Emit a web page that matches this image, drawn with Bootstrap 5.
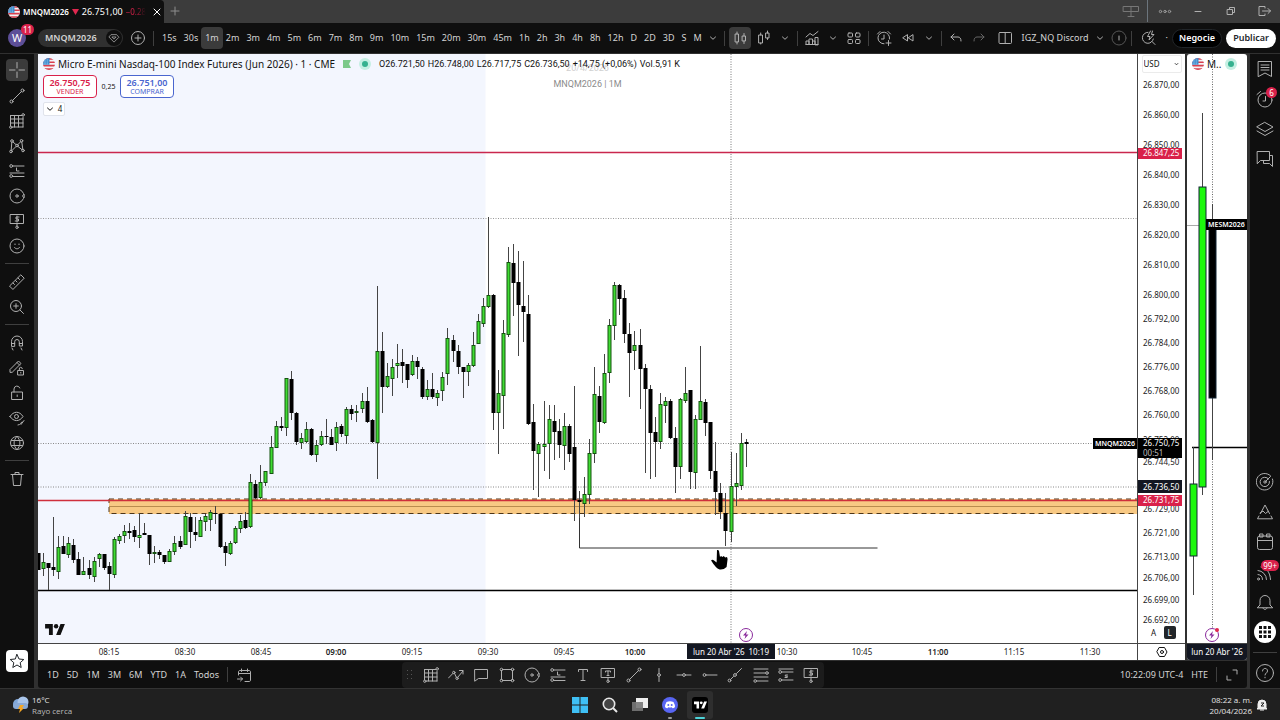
<!DOCTYPE html>
<html lang="es">
<head>
<meta charset="utf-8">
<meta name="viewport" content="width=device-width, initial-scale=1">
<title>MNQM2026 26.751,00</title>
<link href="https://cdn.jsdelivr.net/npm/bootstrap@5.3.0/dist/css/bootstrap.min.css" rel="stylesheet">
<style>
  :root { --ink:#0f0f0f; --frame:#3c3c3c; --soft:#d4d4d4; --red:#d9214a; --blue:#4a66cf; }
  body { font-family:"Noto Sans","Open Sans",sans-serif; font-size:9px; line-height:12px; background:#303030; color:var(--soft); min-height:100vh; overflow-x:hidden; }
  button { font:inherit; color:inherit; background:none; border:0; padding:0; flex:none; }
  svg { display:block; flex:none; overflow:visible; }
  .ic { fill:none; stroke:currentColor; stroke-width:1; stroke-linecap:round; stroke-linejoin:round; width:16px; height:16px; }
  .slot { color:#b0b0b0; }
  .ic-s { width:8px; height:8px; }
  .slot { display:flex; align-items:center; justify-content:center; height:22px; }
  .s16 { width:16px; } .s20 { width:20px; } .s22 { width:22px; } .s26 { width:26px; } .s30 { width:30px; } .s33 { width:33px; }
  .on { background:#3b3b3b; border-radius:4px; }
  .vsep { width:1px; height:15px; background:#3f3f3f; margin:0 4px; flex:none; }
  .tabs { height:23px; background:var(--frame); }
  .tab-on { width:164px; background:var(--ink); padding:0 2px 0 8px; border-radius:0 4px 0 0; gap:3px; }
  .tab-name { font-size:8px; }
  .fade-end { flex:none; font-size:8px; white-space:nowrap; color:var(--red); -webkit-mask-image:linear-gradient(90deg,#000 40%,transparent); mask-image:linear-gradient(90deg,#000 40%,transparent); }
  .tools { height:30px; background:var(--ink); }
  .avatar { width:18px; height:18px; border-radius:50%; background:#5d4f98; color:#fff; font-size:11px; margin-left:8px; flex:none; }
  .pip { position:absolute; background:var(--red); color:#fff; border-radius:6px; font-size:8px; line-height:11px; height:11px; min-width:11px; text-align:center; padding:0 2px; }
  .symbox { width:85px; height:18px; border-radius:9px; background:#303030; margin-left:12px; padding:0 1px 0 7px; }
  .symbox .slot { width:16px; height:16px; border-radius:50%; background:var(--ink); }
  .frames { gap:7px; }
  .frames button { position:relative; }
  .frames .on { margin:0 -4px; padding:5px 4px; }
  .pill { width:50px; height:19px; border-radius:10px; font-weight:600; }
  .work { padding-top:1px; }
  .rail { background:var(--ink); flex:none; padding-top:5px; }
  .rail-l { width:34px; }
  .rail-r { width:30px; padding-top:0; }
  .rail-l .tool { height:25px; width:22px; }
  .rail-l .tool.on { height:22px; margin:0 0 2px; }
  .rail-r .tool { height:30px; width:30px; position:relative; }
  .rail-r .ic { width:18px; height:18px; }
  .hsep { width:24px; height:1px; background:#3f3f3f; margin:5px 0; flex:none; }
  .desk { min-width:0; padding:0 3px 0 4px; }
  .pane { background:#fff; color:#131313; position:relative; min-width:0; }
  .stage { flex:1 1 0; min-height:0; position:relative; overflow:hidden; }
  .stage > svg, .axis > svg { position:absolute; inset:0; width:100%; height:100%; }
  .timeline { height:17px; border-top:1px solid #444; position:relative; overflow:hidden; flex:none; }
  .timeline > svg { width:100%; height:16px; }
  .axis { width:48px; border-left:1px solid #444; flex:none; position:relative; }
  .mini { width:60px; flex:none; border-radius:3px; overflow:hidden; margin-left:2px; }
  .legend { position:absolute; left:5px; top:3px; white-space:nowrap; }
  .flag-gap { margin-right:3px; }
  .inst { font-size:10px; line-height:14px; }
  .ohlc { font-family:Roboto,"Noto Sans",sans-serif; gap:3px; padding-left:4px; }
  .trade { width:54px; height:23px; border:1px solid; border-radius:4px; background:#fff; font-size:7px; line-height:9px; }
  .trade b { font-size:9px; line-height:9px; display:block; font-weight:600; }
  .spread { width:23px; font-size:7px; text-align:center; }
  .count { width:22px; height:14px; background:#fff; border:1px solid #e0e3eb; border-radius:2px; font-size:8px; line-height:10px; }
  .wm { position:absolute; left:0; right:0; top:6px; text-align:center; color:#8b8b8b; font-family:Roboto,"Noto Sans",sans-serif; line-height:16px; }
  .wm-date { color:#cfcfcf; }
  .t8 { font-size:8px; }
  .scale-b { width:12px; height:13px; border-radius:2px; font-size:8px; line-height:12px; }
  .cur { width:40px; height:18px; font-size:8px; line-height:16px; border:1px solid #ebebeb; border-radius:2px; background:#fff url("data:image/svg+xml,%3Csvg xmlns='http://www.w3.org/2000/svg' viewBox='0 0 6 4'%3E%3Cpath d='M1 1l2 2 2-2' fill='none' stroke='%23222'/%3E%3C/svg%3E") no-repeat right 2px center/5px 4px; appearance:none; padding:0 1px; color:#131313; margin:1px auto 0; }
  .ranges { height:27px; background:var(--ink); margin-top:1px; border-radius:0 0 3px 3px; }
  .ranges-l { flex:0 0 364px; padding-left:9px; gap:8px; }
  .dock { flex:0 0 422px; background:#1c1c1c; border-radius:4px; height:26px; }
  .dock button { flex:1 1 0; }
  .taskbar { min-height:32px; background:#202020; border-top:1px solid #333; display:grid; grid-template-columns:1fr auto 1fr; font-size:8px; line-height:11px; color:#e6e6e6; font-family:"Open Sans",sans-serif; }
  .taskbar button { width:30px; height:28px; position:relative; }
  .taskbar button.open { width:26px; background:#2e2e2e; border-radius:3px; margin:0 2px; }
  .tray { padding-right:13px; gap:5px; }
  .run { position:absolute; bottom:0; left:50%; width:4px; margin-left:-2px; height:2px; border-radius:1px; background:#9a9a9a; }
  .open .run { width:10px; margin-left:-5px; background:#4cd3d8; }
</style>
</head>
<body class="d-flex flex-column">

<svg width="0" height="0" class="position-absolute" aria-hidden="true">
  <defs>
    <symbol id="flag" viewBox="0 0 12 12"><clipPath id="fc"><circle cx="6" cy="6" r="6"/></clipPath><g clip-path="url(#fc)" stroke="none"><path fill="#f4f4f6" d="M0 0h12v12H0z"/><path fill="#d8404f" d="M0 0h12v1.7H0zM0 3.4h12v1.7H0zM0 6.8h12v1.7H0zM0 10.2h12v1.8H0z"/><path fill="#3f8fd0" d="M0 0h6.5v6.8H0z"/><path stroke="#d5e8f7" stroke-width=".7" stroke-dasharray=".7 1" d="M.8 2h5M.8 4h5M.8 5.8h5"/></g></symbol>
    <symbol id="chev" viewBox="0 0 8 8"><path d="M1.500 3L4 5.300 6.500 3"/></symbol>
    <symbol id="cross" viewBox="0 0 16 16"><path d="M8 .5V6M8 10v5.500M.5 8H6M10 8h5.500"/></symbol>
    <symbol id="trend" viewBox="0 0 16 16"><circle cx="2.500" cy="13.500" r="1.500"/><circle cx="13.500" cy="2.500" r="1.500"/><path d="M3.600 12.400l8.800-8.800"/></symbol>
    <symbol id="gridbox" viewBox="0 0 16 16"><path d="M1.500 2.500H13M1.500 6H14M1.500 10H14M3.500 14H14M1.500 2.500V13M5.500 2.500V14M9.500 2.500V14M14 4v10"/><circle cx="14.200" cy="1.800" r="1.200"/><circle cx="1.800" cy="14.200" r="1.200"/></symbol>
    <symbol id="xabcd" viewBox="0 0 16 16"><circle cx="3" cy="3" r="1.300"/><circle cx="12.500" cy="2.800" r="1.300"/><circle cx="8" cy="7.500" r="1.300"/><circle cx="2" cy="13.500" r="1.300"/><circle cx="14" cy="12.500" r="1.300"/><path d="M2.800 4.300L2.200 12M12.800 4l1 7.200M4 4l3 2.600M11.600 3.800L9 6.500M3 12.500l4-4M9 8.500l4 3.200"/></symbol>
    <symbol id="pos" viewBox="0 0 16 16"><circle cx="2.200" cy="3" r="1.400"/><circle cx="2.200" cy="13" r="1.400"/><path d="M4 3h11M1 10h14M4 13.500h11M7.500 5v3h2.500"/></symbol>
    <symbol id="short" viewBox="0 0 16 16"><circle cx="2.200" cy="5" r="1.400"/><circle cx="2.200" cy="13" r="1.400"/><path d="M1 2h14M4 5h11M4 13h11M9.500 8H7.300v1.200h2v1.300H7"/></symbol>
    <symbol id="circ" viewBox="0 0 16 16"><circle cx="8" cy="8" r="7"/><circle cx="8" cy="8" r="1.200"/><circle cx="15" cy="8" r="1.300" fill="#0f0f0f"/></symbol>
    <symbol id="pnote" viewBox="0 0 16 16"><path d="M1.500 1.500h13v9h-13zM8 10.500V13M10 4H7v2h2.500v2H6.200M8 3v6.200"/><circle cx="8" cy="14.300" r="1.200"/></symbol>
    <symbol id="tnote" viewBox="0 0 16 16"><path d="M1.500 1.500h13v9h-13zM8 10.500V13M5.500 5V4h5v1M8 4v4.500M7 8.500h2"/><circle cx="8" cy="14.300" r="1.200"/></symbol>
    <symbol id="smile" viewBox="0 0 16 16"><circle cx="8" cy="8" r="7"/><path d="M6 6v.6M10 6v.6M5.500 9.500c1.200 1.800 3.800 1.800 5 0"/></symbol>
    <symbol id="ruler" viewBox="0 0 16 16"><path d="M.8 11.800L11.800.8l3.400 3.400L4.200 15.200zM4 9l1.500 1.500M6.500 6.500L8 8M9 4l1.500 1.500"/></symbol>
    <symbol id="zoomin" viewBox="0 0 16 16"><circle cx="7" cy="7" r="5.500"/><path d="M11 11l3.500 3.500M4.700 7h4.600M7 4.700v4.600"/></symbol>
    <symbol id="magnet" viewBox="0 0 16 16"><path d="M2.500 11V6.500a5.500 5.500 0 0 1 11 0V11h-3.200V6.800a2.300 2.300 0 0 0-4.600 0V11zM2.500 8.500h3.200M10.300 8.500h3.200M3 13l1 2M12 13l1 2"/></symbol>
    <symbol id="penlock" viewBox="0 0 16 16"><path d="M1 12V9.500L9.500 1 12 3.500 3.500 12zM8 2.500L10.500 5M9 10.500h5.500V15H9zM10.300 10.500V9a1.500 1.500 0 0 1 3-.3M11.800 12.300v.8"/></symbol>
    <symbol id="unlock" viewBox="0 0 16 16"><path d="M3 7h10.500v7.500H3zM5 7V4a3 3 0 0 1 5.800-1M8.200 10v1.500"/></symbol>
    <symbol id="eye" viewBox="0 0 16 16"><path d="M1 6.500C4.500.8 10.500.8 14 6.500 10.500 12 4.500 12 1 6.500z"/><circle cx="7.500" cy="6.500" r="2"/><path d="M9 15c3 0 2-2.500 4-3M12 14.500l3-4"/></symbol>
    <symbol id="globe" viewBox="0 0 16 16"><circle cx="8" cy="8" r="6.500"/><path d="M2.500 5.500h11M2.500 10.500h11M8 1.500c-4 3.500-4 9.500 0 13M8 1.500c4 3.500 4 9.500 0 13"/></symbol>
    <symbol id="trash" viewBox="0 0 16 16"><path d="M2 3.500h12M6 3.500v-2h4v2M3.500 3.500L4.500 14.500h7l1-11"/></symbol>
    <symbol id="star" viewBox="0 0 16 16"><path d="M8 1.500l2 4.500 4.800.5-3.600 3.200 1 4.800L8 12l-4.200 2.500 1-4.800L1.200 6.500 6 6z"/></symbol>
    <symbol id="candles" viewBox="0 0 16 16"><path d="M3.500 4h3v8h-3zM5 2v2M5 12v2M10.500 6h3v5h-3zM12 3.500V6M12 11v2.500"/></symbol>
    <symbol id="hollow" viewBox="0 0 16 16"><path d="M3 5h3.500v8H3zM4.700 3v2M4.700 13v1M10 3h3v5h-3zM11.500 1v2M11.500 8v1.500"/></symbol>
    <symbol id="indic" viewBox="0 0 16 16"><path d="M2 14.500V11h3v3.500M5 14.500V9h3.500v5.500M8.500 11h2.500v3.500M11 14.500V7.500h3v7zM2 14.500h12M2 7l4-3.500 3 2L14 1.500"/></symbol>
    <symbol id="four" viewBox="0 0 16 16"><rect x="2" y="3" width="4.500" height="4" rx="1"/><rect x="9.500" y="3" width="4.500" height="4" rx="1"/><rect x="2" y="9.500" width="4.500" height="4" rx="1"/><rect x="9.500" y="9.500" width="4.500" height="4" rx="1"/></symbol>
    <symbol id="alarm" viewBox="0 0 16 16"><path d="M13.500 9A5.800 5.800 0 1 0 8 13.800M8 5v4H5.500M1.500 4l2.500-2.500M12 1.500L14.500 4M12.500 10.500v5M10 13h5"/></symbol>
    <symbol id="rew" viewBox="0 0 16 16"><path d="M7.500 5v6L3 8zM13 5v6L8.500 8z"/></symbol>
    <symbol id="undo" viewBox="0 0 16 16"><path d="M6 4L3 7l3 3M3 7h7c2 0 3 1.500 3 4"/></symbol>
    <symbol id="redo" viewBox="0 0 16 16"><path d="M10 4l3 3-3 3M13 7H6c-2 0-3 1.500-3 4"/></symbol>
    <symbol id="split" viewBox="0 0 16 16"><rect x="2" y="2.500" width="12.500" height="11" rx="1"/><path d="M8.200 2.500v11"/></symbol>
    <symbol id="boltfind" viewBox="0 0 16 16"><path d="M7 2.300A5.500 5.500 0 1 0 12.300 9M11 11.500l3 3M9.500 1L6.500 6.500h2.500L8 10l5-5.500h-2.500L11.500 1"/></symbol>
    <symbol id="heart" viewBox="0 0 16 16"><path d="M4.500 3.500h7L14.500 7 8 13.500 1.500 7zM5.500 7L8 9.500 10.500 7z"/></symbol>
    <symbol id="plus" viewBox="0 0 16 16"><circle cx="8" cy="8" r="6.500"/><path d="M8 5v6M5 8h6"/></symbol>
    <symbol id="list" viewBox="0 0 18 18"><path d="M2.500 1.500h13v15L9 13l-6.500 3.500zM5 5h8M5 7.500h8M5 10h8"/></symbol>
    <symbol id="clock" viewBox="0 0 18 18"><circle cx="9" cy="10" r="7"/><path d="M9.500 6.500V11H7M1 4.500L4.500 1.500"/></symbol>
    <symbol id="layers" viewBox="0 0 18 18"><path d="M9 2.500l8 4.500-8 4.500L1 7zM1 11l8 4.500 8-4.500"/></symbol>
    <symbol id="chat" viewBox="0 0 18 18"><path d="M1.500 1.500h12v9h-9l-3 3zM13.500 5.500h3v11l-3-3h-6v-3"/></symbol>
    <symbol id="radar" viewBox="0 0 18 18"><path d="M14.500 2.800A8.300 8.300 0 1 0 16.500 6M12.500 6A4.700 4.700 0 1 0 13.500 8.500M9.500 8.500L14.500 3.500"/><circle cx="9" cy="9" r="1.200"/></symbol>
    <symbol id="peak" viewBox="0 0 18 18"><path d="M4.500 10.500L9 2l4.500 8.500M4 10l3-2 2.500 2.500L12 8.500M3 13l-1.500 2.800h15L15 13"/></symbol>
    <symbol id="cal" viewBox="0 0 18 18"><rect x="1.500" y="3" width="15" height="13.500" rx="2"/><path d="M1.500 7.500h15M4 1h3v3H4zM11 1h3v3h-3z"/></symbol>
    <symbol id="feed" viewBox="0 0 18 18"><path d="M2 11.500a5 5 0 0 1 4.500 5M2 7.500a9 9 0 0 1 8.500 9M5 4c6 1 9 5.500 9.500 12.500"/><circle cx="2.500" cy="16" r="1"/></symbol>
    <symbol id="bell" viewBox="0 0 18 18"><path d="M1.500 14.500L4 12V7.500a5 5 0 0 1 10 0V12l2.500 2.500zM7 15c.5 2 3.500 2 4 0"/></symbol>
    <symbol id="help" viewBox="0 0 18 18"><circle cx="9" cy="9" r="8.500"/><path d="M6.500 7c0-3.500 5-3.500 5 0 0 2-2.500 2-2.500 4M9 13.200v.6"/></symbol>
    <symbol id="zig" viewBox="0 0 16 16"><path d="M.5 11L4.800 6.500M6.600 6.500l1.700 3.600M9.800 10.200L15 4M11.500 3.500H15V7"/><circle cx="5.800" cy="5.500" r="1.200"/><circle cx="9" cy="11.300" r="1.200"/></symbol>
    <symbol id="bubble" viewBox="0 0 16 16"><path d="M2 2.500h12.500v9H5.500l-3.500 2.500z"/></symbol>
    <symbol id="rect" viewBox="0 0 16 16"><path d="M3.500 2.500h9M3.500 13.500h9M2.500 3.500v9M13.500 3.500v9"/><circle cx="2.500" cy="2.500" r="1.300"/><circle cx="13.500" cy="2.500" r="1.300"/><circle cx="2.500" cy="13.500" r="1.300"/><circle cx="13.500" cy="13.500" r="1.300"/></symbol>
    <symbol id="tee" viewBox="0 0 16 16"><path d="M3.500 4.500v-2h9v2M8 2.500v11M6 13.500h4"/></symbol>
    <symbol id="vline" viewBox="0 0 16 16"><path d="M8 1.500v5M8 9.500v5"/><circle cx="8" cy="8" r="1.400"/></symbol>
    <symbol id="hline" viewBox="0 0 16 16"><path d="M1 8h5.500M9.500 8H15"/><circle cx="8" cy="8" r="1.400"/></symbol>
    <symbol id="ray" viewBox="0 0 16 16"><path d="M4 8h11"/><circle cx="2.500" cy="8" r="1.400"/></symbol>
    <symbol id="tray" viewBox="0 0 16 16"><path d="M3.500 12.500l3-3M9.500 6.500L14.500 1.500"/><circle cx="2.500" cy="13.500" r="1.400"/><circle cx="8" cy="8" r="1.400"/></symbol>
    <symbol id="fib" viewBox="0 0 16 16"><path d="M1 2h14M1 6h11.500M1 10h14M4 14h11"/><circle cx="14" cy="6" r="1.300"/><circle cx="2.200" cy="14" r="1.300"/></symbol>
    <symbol id="goto" viewBox="0 0 16 16"><path d="M2.500 8V5c0-1 .5-1.500 1.500-1.500h9c1 0 1.500.5 1.500 1.500v8c0 1-.5 1.500-1.500 1.500H9M5.500 2v2.500M11.500 2v2.500M2.500 6.500h12M1.500 12h5M4.500 10l2 2-2 2"/></symbol>
    <symbol id="tv" viewBox="0 0 36 20"><path stroke="none" fill="currentColor" d="M14 20H7V8H0V0h14zM28 20h-8L28 0h8z"/><circle cx="20" cy="4" r="4" stroke="none" fill="currentColor"/></symbol>
  </defs>
</svg>

<!-- window tabs -->
<header class="tabs d-flex align-items-stretch">
  <div class="tab-on d-flex align-items-center text-white">
    <svg width="12" height="12"><use href="#flag"/></svg>
    <b class="fw-semibold tab-name">MNQM2026</b>
    <svg width="7" height="6"><path d="M0 0h7L3.500 6z" fill="#e0284f"/></svg>
    <span>26.751,00</span><span class="fade-end">−0.28</span>
    <button class="slot s16 ms-auto text-white" aria-label="Cerrar"><svg class="ic ic-s"><path d="M1 1l6 6M7 1L1 7"/></svg></button>
  </div>
  <button class="slot s22" aria-label="Nueva pestaña"><svg class="ic ic-s" style="color:#8d8d8d"><path d="M4 0v8M0 4h8"/></svg></button>
  <div class="ms-auto d-flex">
    <button class="slot s33 border-end border-secondary" aria-label="Pantalla"><svg class="ic" style="color:#777"><path d="M.5 3.500h15v5H.5zM8 3.500v10M5 13.500h6"/></svg></button>
    <button class="slot s33" aria-label="Menú"><svg class="ic" style="color:#999"><circle cx="3.500" cy="8.500" r="1.200"/><circle cx="8" cy="8.500" r="1.200"/><circle cx="12.500" cy="8.500" r="1.200"/></svg></button>
    <button class="slot s33" aria-label="Minimizar"><svg class="ic"><path d="M5 8.500h6"/></svg></button>
    <button class="slot s33" aria-label="Restaurar"><svg class="ic"><path d="M4.500 6.500h5v5h-5zM6.500 6.500v-2h5v5h-2"/></svg></button>
    <button class="slot s33" aria-label="Salir"><svg class="ic"><path d="M9 5V3.500H3v9h6V11M6.500 8h8M12 5.500L14.500 8 12 10.500"/></svg></button>
  </div>
</header>

<!-- chart toolbar -->
<nav class="tools d-flex align-items-center" aria-label="Herramientas del gráfico">
  <button class="avatar slot position-relative text-white" aria-label="Cuenta">W<span class="pip" style="left:13px;top:-5px">11</span></button>
  <div class="symbox d-flex align-items-center justify-content-between flex-shrink-0"><b class="fw-semibold">MNQM2026</b><button class="slot" aria-label="Favorito"><svg class="ic" viewBox="0 0 16 16" style="width:12px;height:12px"><use href="#heart"/></svg></button></div>
  <button class="slot s30" aria-label="Comparar"><svg class="ic"><use href="#plus"/></svg></button>
  <div class="vsep ms-0"></div>
  <div class="frames d-flex align-items-center ps-1" id="frames"></div>
  <button class="slot s22" aria-label="Más intervalos"><svg class="ic ic-s"><use href="#chev"/></svg></button>
  <div class="vsep ms-0"></div>
  <button class="slot s22 on" aria-label="Velas"><svg class="ic"><use href="#candles"/></svg></button>
  <button class="slot s26" aria-label="Velas huecas"><svg class="ic"><use href="#hollow"/></svg></button>
  <button class="slot s16" aria-label="Tipos"><svg class="ic ic-s"><use href="#chev"/></svg></button>
  <div class="vsep"></div>
  <button class="slot s20" aria-label="Indicadores"><svg class="ic"><use href="#indic"/></svg></button>
  <button class="slot s22" aria-label="Plantillas"><svg class="ic ic-s"><use href="#chev"/></svg></button>
  <button class="slot s20" aria-label="Diseño"><svg class="ic"><use href="#four"/></svg></button>
  <div class="vsep"></div>
  <button class="slot s22" aria-label="Alerta"><svg class="ic"><use href="#alarm"/></svg></button>
  <button class="slot s26" aria-label="Reproducción"><svg class="ic"><use href="#rew"/></svg></button>
  <button class="slot s16" aria-label="Opciones"><svg class="ic ic-s"><use href="#chev"/></svg></button>
  <div class="vsep"></div>
  <button class="slot s20" aria-label="Deshacer"><svg class="ic"><use href="#undo"/></svg></button>
  <button class="slot s26" aria-label="Rehacer"><svg class="ic" style="color:#666"><use href="#redo"/></svg></button>
  <button class="slot s26" aria-label="Distribución"><svg class="ic"><use href="#split"/></svg></button>
  <button class="ms-1">IGZ_NQ Discord</button>
  <button class="slot s22" aria-label="Diseños guardados"><svg class="ic ic-s"><use href="#chev"/></svg></button>
  <button class="slot s16" aria-label="Información"><svg class="ic"><circle cx="8" cy="8" r="7" stroke="#555"/><path d="M8 6v4"/></svg></button>
  <div class="ms-auto d-flex align-items-center pe-1">
    <div class="vsep"></div>
    <button class="slot s26" aria-label="Buscar"><svg class="ic"><use href="#boltfind"/></svg></button>
    <span class="me-1 ms-1">·</span>
    <button class="pill border border-dark text-white" style="background:#000">Negocie</button>
    <button class="pill ms-1 bg-white text-dark">Publicar</button>
  </div>
</nav>

<main class="work d-flex flex-fill">
  <nav class="rail rail-l d-flex flex-column align-items-center" id="railL" aria-label="Dibujo"></nav>

  <div class="desk d-flex flex-column flex-fill">
    <div class="d-flex flex-fill">
      <section class="pane d-flex flex-fill flex-column">
        <div class="stage">
          <svg id="chart"></svg>
          <div class="wm"><div class="wm-date">20/4/2026</div>MNQM2026 | 1M</div>
          <div class="legend">
            <div class="d-flex align-items-center">
              <svg width="12" height="12" class="flag-gap"><use href="#flag"/></svg>
              <span class="inst">Micro E-mini Nasdaq-100 Index Futures (Jun 2026) · 1 · CME</span>
              <svg width="8" height="8" class="ms-2"><path d="M0 0h8L6 4l2 4H0z" fill="#7cc98a"/></svg>
              <svg width="12" height="12" class="ms-2 me-1"><circle cx="6" cy="6" r="6" fill="#c5efe3"/><circle cx="6" cy="6" r="3" fill="#35b18f"/></svg>
              <span class="ohlc d-flex"><span>O26.721,50</span><span>H26.748,00</span><span>L26.717,75</span><span>C26.736,50</span><span>+14,75 (+0,06%)</span><span>Vol.5,91 K</span></span>
            </div>
            <div class="d-flex align-items-center mt-1">
              <button class="trade" style="color:var(--red)"><b>26.750,75</b>VENDER</button>
              <span class="spread">0,25</span>
              <button class="trade" style="color:var(--blue)"><b>26.751,00</b>COMPRAR</button>
            </div>
            <button class="count d-flex align-items-center justify-content-center mt-1"><svg class="ic ic-s me-1"><use href="#chev"/></svg>4</button>
          </div>
        </div>
        <div class="timeline"><svg id="times"></svg></div>
      </section>
      <aside class="pane axis d-flex flex-column" aria-label="Escala de precios">
        <svg id="prices"></svg>
        <select id="cur" class="cur position-relative" aria-label="Moneda"><option>USD</option></select>
        <div class="d-flex justify-content-center gap-1 mt-auto position-relative mb-1"><button class="scale-b">A</button><button class="scale-b bg-dark text-white">L</button></div>
        <div class="timeline d-flex justify-content-center align-items-center"><svg style="width:12px;height:12px" class="ic" viewBox="0 0 12 12"><path d="M3.500 1.500h5L11 6l-2.500 4.500h-5L1 6z"/><circle cx="6" cy="6" r="1.500"/></svg></div>
      </aside>
      <section class="pane mini d-flex flex-column">
        <div class="stage">
          <svg id="mini"></svg>
          <div class="legend d-flex align-items-center inst"><svg width="12" height="12" class="flag-gap"><use href="#flag"/></svg>M..<svg width="12" height="12" class="ms-1"><circle cx="6" cy="6" r="6" fill="#c5efe3"/><circle cx="6" cy="6" r="3" fill="#35b18f"/></svg></div>
        </div>
        <div class="timeline text-white text-center t8" style="background:#131722;line-height:16px">lun 20 Abr '26</div>
      </section>
    </div>
    <footer class="ranges d-flex align-items-center">
      <div class="ranges-l d-flex align-items-center">
        <button>1D</button><button>5D</button><button>1M</button><button>3M</button><button>6M</button><button>YTD</button><button>1A</button><button>Todos</button>
        <div class="vsep mx-0"></div><button class="slot" aria-label="Ir a"><svg class="ic"><use href="#goto"/></svg></button>
      </div>
      <div class="dock d-flex align-items-center" id="dock"><svg width="16" height="12" viewBox="0 0 16 12" fill="#555"><path d="M5 1h1v1H5zM9 1h1v1H9zM5 5h1v1H5zM9 5h1v1H9zM5 9h1v1H5zM9 9h1v1H9z"/></svg></div>
      <div class="d-flex align-items-center ms-auto">
        <button class="me-2">10:22:09 UTC-4</button><button class="me-1">HTE</button><div class="vsep me-0"></div>
        <button class="slot s30" aria-label="Maximizar"><svg class="ic"><path d="M9 3h4v4M3 9v4h4"/></svg></button>
      </div>
    </footer>
  </div>

  <nav class="rail rail-r d-flex flex-column align-items-center" id="railR" aria-label="Paneles"></nav>
</main>

<!-- desktop task bar -->
<footer class="taskbar align-items-center">
  <div class="d-flex align-items-center ps-2">
    <svg width="20" height="18" class="ms-1" viewBox="0 0 20 18"><circle cx="6" cy="8" r="5" fill="#7fa6d8"/><circle cx="11" cy="6" r="5.500" fill="#a9c5ea"/><rect x="1" y="7" width="15" height="6" rx="3" fill="#88a9d6"/><path d="M8 9h4l-2 3h2l-5 5 1-4H6z" fill="#f5a623"/></svg>
    <div>16°C<br><span style="color:#bbb">Rayo cerca</span></div>
  </div>
  <div class="d-flex align-items-center">
    <button class="slot" aria-label="Inicio"><svg width="16" height="16"><path d="M0 0h7.500v7.500H0zM8.500 0H16v7.500H8.500zM0 8.500h7.500V16H0zM8.500 8.500H16V16H8.500z" fill="#3fc0f5"/></svg></button>
    <button class="slot" aria-label="Buscar"><svg width="16" height="16"><circle cx="7" cy="7" r="5.700" fill="#444" stroke="#e8e8e8" stroke-width="1.600"/><path d="M11 11l4 4" stroke="#e8e8e8" stroke-width="2"/></svg></button>
    <button class="slot" aria-label="Vista de tareas"><svg width="16" height="16"><path d="M4 1h12v10H4z" fill="#eee"/><path d="M0 5h11v9H0z" fill="#777" opacity=".9"/></svg></button>
    <button class="slot" aria-label="Discord"><svg width="16" height="16"><circle cx="8" cy="8" r="8" fill="#5865f2"/><path d="M4.500 5q3.500-1.500 7 0 1.500 2.500 1.500 5-1 1.200-2.500 1.300l-.7-1q-1.800.4-3.600 0l-.7 1Q4 11.200 3 10q0-2.500 1.500-5z" fill="#fff"/><circle cx="6.300" cy="8" r="1" fill="#5865f2"/><circle cx="9.700" cy="8" r="1" fill="#5865f2"/></svg><span class="run"></span></button>
    <button class="slot open" aria-label="TradingView"><svg width="16" height="16"><rect width="16" height="16" rx="3" fill="#000"/><svg x="2" y="4" width="13" height="8" color="#fff"><use href="#tv"/></svg></svg><span class="run"></span></button>
  </div>
  <div class="tray d-flex align-items-center justify-content-end text-end">
    <div>08:22 a. m.<br>20/04/2026</div>
    <svg width="10" height="12" viewBox="0 0 10 12"><path d="M1 9V5a4 4 0 0 1 8 0v4l1 1H0zM3 11h4" fill="#eee" stroke="#eee"/><path d="M4 4h3L4 7h3" fill="none" stroke="#222"/></svg>
  </div>
</footer>

<script src="https://cdn.jsdelivr.net/npm/bootstrap@5.3.0/dist/js/bootstrap.bundle.min.js"></script>
<script>
  const $ = id => document.getElementById(id);
  const icon = n => `<svg class="ic"><use href="#${n}"/></svg>`;

  $('frames').innerHTML = '15s 30s 1m 2m 3m 4m 5m 6m 7m 8m 9m 10m 15m 20m 30m 45m 1h 2h 3h 4h 8h 12h D 2D 3D S M'
    .split(' ').map(t => `<button${t === '1m' ? ' class="on"' : ''}>${t}</button>`).join('');

  $('railL').innerHTML = 'cross trend gridbox xabcd pos circ pnote smile | ruler zoomin | magnet penlock unlock eye globe | trash'
    .split(' ').map((n, i) => n === '|' ? '<div class="hsep"></div>' :
      `<button class="slot tool${i ? '' : ' on'}" aria-label="${n}">${icon(n)}</button>`).join('')
    + `<button class="slot s22 mt-auto mb-3 bg-white text-dark rounded-1" aria-label="Favoritos">${icon('star')}</button>`;

  const pips = { clock: '6', feed: '99+' };
  const right = n => n === '|' ? '<div class="hsep"></div>' : n === 'apps'
    ? '<button class="slot tool" aria-label="Productos"><svg width="22" height="22"><circle cx="11" cy="11" r="11" fill="#fff"/><path fill="#111" d="M5 5h3v3H5zM9.500 5h3v3h-3zM14 5h3v3h-3zM5 9.500h3v3H5zM9.500 9.500h3v3h-3zM14 9.500h3v3h-3zM5 14h3v3H5zM9.500 14h3v3h-3zM14 14h3v3h-3z"/></svg></button>'
    : `<button class="slot tool" aria-label="${n}">${icon(n)}${pips[n] ? `<span class="pip" style="right:${n === 'feed' ? 1 : 3}px;top:3px">${pips[n]}</span>` : ''}</button>`;
  $('railR').innerHTML = 'list clock layers chat'.split(' ').map(right).join('') + '<div class="mt-auto"></div>'
    + 'radar peak cal feed bell apps | help'.split(' ').map(right).join('');

  $('dock').innerHTML += 'gridbox zig bubble rect circ pos tee tnote trend vline hline ray tray fib short pnote'
    .split(' ').map(n => `<button class="slot" aria-label="${n}">${icon(n)}</button>`).join('');

  // One-minute bars: high, body top, body bottom, low, u(p) or d(own)
  const bars = `553 553 570 570 d;553 562 569 576 u;563 563 568 590 d;517 567 570 576 d;536 547 572 579 u;536 546 554 554 d;537 543 555 558 u;539 545 560 563 d;552 559 575 575 d;557 571 575 575 u;560 568 575 579 d;557 561 577 582 u;553 554 559 567 u;554 554 568 570 d;562 566 574 590 d;537 539 575 578 u;534 536 541 544 u;525 531 536 543 u;523 531 533 539 d;526 530 537 542 d;513 535 538 548 u;523 533 535 535 d;535 535 554 565 d;546 552 554 563 u;550 552 555 559 d;555 555 562 564 d;549 551 562 562 u;536 543 552 555 u;536 541 547 549 d;511 516 545 545 u;513 517 532 548 d;517 532 535 541 d;517 520 537 537 u;514 516 522 531 u;510 512 520 531 u;506 513 514 524 d;514 514 547 548 d;542 546 553 566 d;541 543 554 555 u;526 528 543 544 u;515 521 529 533 u;512 520 528 529 d;474 482 527 528 u;480 484 498 499 d;465 482 498 499 u;471 471 483 486 u;436 447 474 474 u;421 426 448 448 u;417 426 428 431 d;378 378 428 436 u;371 379 413 420 d;412 413 442 445 d;433 438 443 449 u;422 429 442 443 u;428 429 455 456 d;440 445 455 462 u;431 436 445 446 u;419 436 437 444 d;429 437 445 445 d;422 427 443 451 u;424 426 434 437 d;407 409 436 444 u;405 409 414 420 d;405 411 413 422 u;393 401 409 413 u;387 401 422 423 d;419 420 442 443 d;286 351 443 479 u;332 351 387 413 d;363 376 387 388 u;359 367 379 396 u;344 363 366 378 u;349 362 366 383 d;364 364 380 388 d;355 361 375 376 u;357 361 367 379 d;367 369 397 399 d;380 389 397 400 u;373 389 397 399 d;390 393 398 406 u;372 377 391 401 u;328 338 374 385 u;335 340 351 362 d;345 351 367 374 d;367 367 372 398 d;363 365 372 386 u;332 345 366 367 u;314 321 344 344 u;298 306 324 327 u;217 295 307 308 u;294 295 413 430 d;370 393 413 454 u;320 333 396 429 u;247 262 335 337 u;244 263 283 316 d;251 282 305 356 d;261 306 312 342 d;295 314 424 425 d;404 422 451 490 d;442 444 454 497 u;401 444 447 471 u;405 419 444 479 u;405 421 432 460 d;419 431 445 458 d;413 426 446 470 u;424 426 454 462 d;386 447 500 521 d;491 500 502 518 d;477 494 504 517 u;439 453 495 504 u;367 394 454 463 u;386 396 422 433 d;354 373 423 424 u;319 325 373 383 u;282 285 326 340 u;284 285 299 315 d;290 298 334 343 d;323 334 353 397 d;331 345 351 370 u;329 345 369 409 d;364 368 389 473 d;385 389 433 479 d;417 432 442 477 d;393 404 442 449 u;397 401 406 423 u;399 401 438 439 d;427 438 467 493 d;398 399 467 479 u;367 393 401 403 u;390 390 472 489 d;415 419 473 489 u;346 401 420 420 u;399 402 423 436 d;422 422 471 479 d;442 471 492 515 d;483 493 512 519 d;493 513 531 546 d;452 486 532 542 u;453 483 487 506 u;433 443 486 490 u;439 442 444 467 d`
    .split(';').map(s => s.split(' '));
  const top0 = 54, step = 5.055;
  const line = (x1, y1, x2, y2, c, more = '') => `<line x1="${x1}" y1="${y1}" x2="${x2}" y2="${y2}" stroke="${c}" ${more}/>`;
  const box = (x, y, w, h, f, more = '') => `<rect x="${x}" y="${y}" width="${w}" height="${h}" fill="${f}" ${more}/>`;
  const text = (x, y, t, more = '') => `<text x="${x}" y="${y}" font-size="8" ${more}>${t}</text>`;
  const tag = (x, y, t) => `<text x="${x}" y="${y}" font-size="7" font-weight="600" fill="#fff">${t}</text>`;
  const dot = 'stroke-dasharray="1 1.500"';
  const bolt = (x, y) => `<g fill="none" stroke="#8a2a9c"><circle cx="${x}" cy="${y}" r="6.500"/><path fill="#8a2a9c" stroke="none" d="M${x + 1} ${y - 4}l-4 4.500h2.500l-1 3.500 4-4.500h-2.500z"/></g>`;

  let s = box(0, 0, 447.5, '100%', '#f3f6fe');
  s += line(0, 164.5, '100%', 164.5, '#999', dot) + line(0, 389.5, '100%', 389.5, '#888', dot) + line(0, 433, '100%', 433, '#888', dot);
  s += line(693, 0, 693, '100%', '#777', dot);
  s += line(0, 98.5, '100%', 98.5, '#c9274e', 'stroke-width="1.500"');
  s += line(0, 536.5, '100%', 536.5, '#000', 'stroke-width="1.300"');
  s += `<path d="M541.500 447v47h298" fill="none" stroke="#333"/>`;
  s += box(71, 445, '100%', 15, '#f8c984') + line(71, 452.5, '100%', 452.5, '#b98b4e')
    + `<rect x="71" y="445" width="100%" height="14.500" fill="none" stroke="#4c3518" stroke-dasharray="5 4"/>` + line(0, 446.5, '100%', 446.5, '#cf2f3c', 'stroke-width="1.500"');
  bars.forEach(([h, a, b, l, k], i) => {
    const x = Math.round(i * step);
    s += line(x + .5, h - top0, x + .5, l - top0, '#444');
    const bh = Math.max(1, b - a);
    s += k === 'u' ? box(x - 1, a - top0 + .5, 3, Math.max(1, bh - 1), '#3fdc32', 'stroke="#14520f"') : box(x - 1.5, a - top0, 4, bh, '#000');
  });
  s += bolt(708, 581);
  s += `<svg x="7" y="570" width="20" height="11" color="#111"><use href="#tv"/></svg>`;
  s += `<path fill="#000" d="M679 496q1.500-.5 2 1l1 6 1-1 1.500 1 1.200-1 1.500 1.500 1.800-.5.600 2-1 8q-3 3-7 2.500-4-1.500-8.500-9 1-1.500 3 0l2.500 2z"/>`;
  s += `<svg x="100%" y="384" overflow="visible">${box(-44, 0, 44, 11, '#000') + tag(-42, 8, 'MNQM2026')}</svg>`;
  $('chart').innerHTML = s;

  // Time axis: x position, label, bold flag
  $('times').innerHTML = [[71, '08:15'], [147, '08:30'], [223, '08:45'], [298, '09:00', 1], [374, '09:15'], [450, '09:30'], [526, '09:45'], [597, '10:00', 1], [749, '10:30'], [824, '10:45'], [900, '11:00', 1], [976, '11:15'], [1052, '11:30']]
    .map(([x, t, b]) => text(x, 11, t, `text-anchor="middle" fill="#222" ${b ? 'font-weight="600"' : ''}`)).join('')
    + box(649, 0, 88, 15, '#131722') + text(655, 11, "lun 20 Abr '26", 'fill="#fff"') + text(731, 11, '10:19', 'fill="#fff" text-anchor="end"');

  // Price axis: y position, label
  $('prices').innerHTML = [[84, '26.870,00'], [114, '26.860,00'], [144, '26.850,00'], [174, '26.840,00'], [204, '26.830,00'], [234, '26.820,00'], [264, '26.810,00'], [294, '26.800,00'], [318, '26.792,00'], [342, '26.784,00'], [366, '26.776,00'], [390, '26.768,00'], [414, '26.760,00'], [439, '26.752,00'], [461, '26.744,50'], [508, '26.729,00'], [532, '26.721,00'], [556, '26.713,00'], [577, '26.706,00'], [599, '26.699,00'], [619, '26.692,00']]
    .map(([y, t]) => text(5, y - 50, t, 'fill="#222"')).join('')
    + box(0, 94, 44, 11, '#d9214a') + text(5, 102, '26.847,25', 'fill="#fff"')
    + box(0, 384, 44, 20, '#000') + text(5, 392, '26.750,75', 'fill="#fff"') + text(5, 402, '00:51', 'fill="#bbb"')
    + box(0, 426, 44, 13, '#131722') + text(5, 436, '26.736,50', 'fill="#fff"')
    + box(0, 441, 44, 11, '#d9214a') + text(5, 449, '26.731,75', 'fill="#fff"');

  const big = (x, a, b, h, l, f) => line(x + .5, h, x + .5, l, '#444') + box(x - 3, a, 7, b - a, f, 'stroke="#123"');
  $('mini').innerHTML = line(25.5, 0, 25.5, 574, '#666', dot) + line(0, 171.5, '100%', 171.5, '#aaa') + line(5, 393.5, '100%', 393.5, '#000', 'stroke-width="1.300"')
    + big(6, 430, 502, 393, 541, '#1cf80d') + big(15, 133, 433, 59, 441, '#1cf80d') + big(25, 170, 344, 150, 406, '#000')
    + box(19, 165, 42, 11, '#000') + tag(21, 173, 'MESM2026') + bolt(25, 581) + '<circle cx="30" cy="576" r="2" fill="#e0284f"/>';
</script>
</body>
</html>
